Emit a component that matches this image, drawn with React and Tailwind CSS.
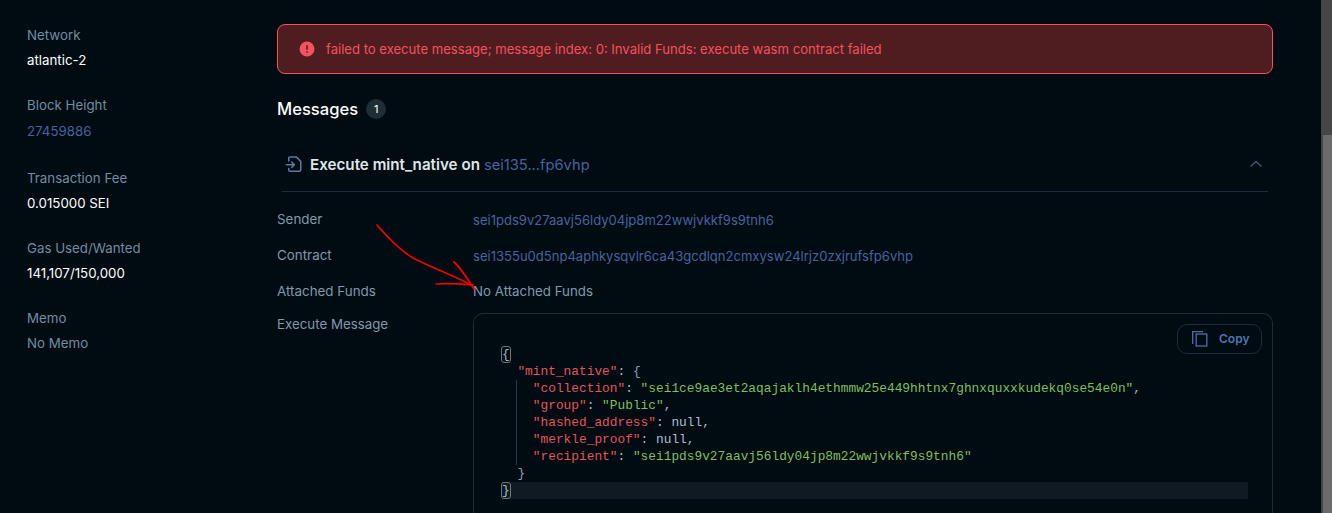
import React from 'react';

const sans = "font-['Inter',sans-serif]";

const SideItem = ({ label, value, valueClass = 'text-white', gapClass = 'mt-[5px]', className = '' }) => (
    <div className={`flex flex-col ${className}`}>
        <span className="h-[20px] text-[13.3px] leading-[20px] text-[#6f8ea3]">{label}</span>
        <span className={`h-[20px] text-[13.3px] leading-[20px] ${gapClass} ${valueClass}`}>{value}</span>
    </div>
);

const Row = ({ label, children, className = '' }) => (
    <div className={`flex items-center ${className}`}>
        <span className="w-[196px] shrink-0 text-[13.4px] text-[#7f9aad]">{label}</span>
        {children}
    </div>
);

const Key = ({ children }) => <span className="text-[#e0565b]">{children}</span>;
const Str = ({ children }) => <span className="text-[#7fbf5f]">{children}</span>;
const Pun = ({ children }) => <span className="text-[#a9b7c6]">{children}</span>;

const CodeBlock = () => (
    <div className="relative mt-[20px] h-[200px] rounded-t-[10px] border border-b-0 border-[#1d2c38] pl-[28px] pt-[32px]">
        <button className="absolute right-[10px] top-[10px] flex h-[30px] w-[85px] items-center rounded-[10px] border border-[#1d2c38] pl-[14px] text-[#4f74b3]">
            <svg width="16" height="16" viewBox="0 0 16 16" fill="none" stroke="#4f6fa8" strokeWidth="1.3">
                <path d="M0.7 13V0.7H11" />
                <rect x="4.2" y="3" width="10.6" height="12" />
            </svg>
            <span className="ml-[11px] text-[12px] font-semibold">Copy</span>
        </button>
        <pre className="relative font-['Liberation_Mono',monospace] text-[12.84px] leading-[17px] text-[#a9b7c6]">
            <div><span className="rounded-[2px] outline outline-1 outline-[#6b7780]">{'{'}</span></div>
            <div>{'  '}<Key>"mint_native"</Key><Pun>: </Pun><span className="text-[#8aa0c0]">{'{'}</span></div>
            <div>{'    '}<Key>"collection"</Key><Pun>: </Pun><Str>"sei1ce9ae3et2aqajaklh4ethmmw25e449hhtnx7ghnxquxxkudekq0se54e0n"</Str><Pun>,</Pun></div>
            <div>{'    '}<Key>"group"</Key><Pun>: </Pun><Str>"Public"</Str><Pun>,</Pun></div>
            <div>{'    '}<Key>"hashed_address"</Key><Pun>: </Pun><span className="text-[#a9bfd6]">null</span><Pun>,</Pun></div>
            <div>{'    '}<Key>"merkle_proof"</Key><Pun>: </Pun><span className="text-[#a9bfd6]">null</span><Pun>,</Pun></div>
            <div>{'    '}<Key>"recipient"</Key><Pun>: </Pun><Str>"sei1pds9v27aavj56ldy04jp8m22wwjvkkf9s9tnh6"</Str></div>
            <div>{'  '}<span className="text-[#8aa0c0]">{'}'}</span></div>
            <div className="mr-[24px] bg-[#0f1a22]"><span className="rounded-[2px] outline outline-1 outline-[#6b7780]">{'}'}</span></div>
            <span className="absolute left-[14px] top-[34px] h-[85px] w-px bg-[#2c3740]"></span>
        </pre>
    </div>
);

export default function App() {
    return (
        <div className={`relative flex h-[513px] overflow-hidden bg-[#010b12] ${sans}`}>
            <aside className="w-[277px] shrink-0 pl-[27px] pt-[25px]">
                <SideItem label="Network" value="atlantic-2" />
                <SideItem className="mt-[25px]" gapClass="mt-[6px]" label="Block Height" value="27459886" valueClass="text-[#46639f]" />
                <SideItem className="mt-[27px]" label="Transaction Fee" value="0.015000 SEI" />
                <SideItem className="mt-[25px]" label="Gas Used/Wanted" value="141,107/150,000" />
                <SideItem className="mt-[25px]" label="Memo" value="No Memo" valueClass="text-[#6f8ea3]" />
            </aside>
            <main className="w-[996px] shrink-0 pt-[24px]">
                <div className="flex h-[50px] items-center rounded-[8px] border border-[#f4525e] bg-[#4f1c1f] pl-[20px] text-[13.08px] text-[#f4525e]">
                    <svg width="18" height="18" viewBox="0 0 24 24" fill="#f4525e">
                        <path d="M12 2a10 10 0 1 0 0 20 10 10 0 0 0 0-20zm1 15h-2v-2h2v2zm0-4h-2V7h2v6z" />
                    </svg>
                    <span className="ml-[10px] mt-[2px]">failed to execute message; message index: 0: Invalid Funds: execute wasm contract failed</span>
                </div>
                <div className="mt-[22px] flex h-[26px] items-center">
                    <span className="text-[16.6px] font-medium text-white">Messages</span>
                    <span className="ml-[8px] flex h-[20px] w-[20px] items-center justify-center rounded-full bg-[#1f2d36] text-[11px] text-white">1</span>
                </div>
                <div className="mx-[5px] mt-[18px] flex h-[52px] items-center border-b border-[#1d2c38] pb-[3px] pl-[3px] pr-[3px]">
                    <svg width="18" height="18" viewBox="0 0 24 24" fill="none" stroke="#5b78a8" strokeWidth="2" strokeLinecap="round" strokeLinejoin="round">
                        <path d="M5 8V4a1.5 1.5 0 0 1 1.5-1.5H15l6 6V20a1.5 1.5 0 0 1-1.5 1.5h-13A1.5 1.5 0 0 1 5 20v-2" />
                        <path d="M2 13h10M9 9.5l3.5 3.5L9 16.5" />
                    </svg>
                    <span className="ml-[7px] mt-[2px] text-[15.2px] font-semibold text-[#dfe6ea]">Execute mint_native on</span>
                    <span className="ml-[4px] mt-[2px] text-[14.7px] text-[#46639f]">sei135...fp6vhp</span>
                    <svg className="ml-auto mr-[1px]" width="16" height="16" viewBox="0 0 16 16" fill="none" stroke="#3c5368" strokeWidth="1.6">
                        <path d="M2.5 10.5L8 5.5l5.5 5" />
                    </svg>
                </div>
                <Row className="mt-[15px] h-[24px]" label="Sender">
                    <span className="mt-[4px] text-[13.05px] text-[#46639f]">sei1pds9v27aavj56ldy04jp8m22wwjvkkf9s9tnh6</span>
                </Row>
                <Row className="mt-[12px] h-[24px]" label="Contract">
                    <span className="mt-[4px] text-[13.05px] text-[#46639f]">sei1355u0d5np4aphkysqvlr6ca43gcdlqn2cmxysw24lrjz0zxjrufsfp6vhp</span>
                </Row>
                <Row className="mt-[12px] h-[24px]" label="Attached Funds">
                    <span className="mt-[2px] text-[13.3px] text-[#7f9aad]">No Attached Funds</span>
                </Row>
                <div className="flex">
                    <span className="mt-[12px] h-[20px] w-[196px] shrink-0 text-[13.3px] text-[#7f9aad]">Execute Message</span>
                    <div className="-mt-[10px] flex-1">
                        <CodeBlock />
                    </div>
                </div>
            </main>
            <div className="ml-[48px] w-[11px] shrink-0 bg-[#464646]">
                <div className="ml-[2px] mt-[135px] h-[378px] bg-[#6b6b6b]"></div>
            </div>
            {/* hand drawn annotation arrow */}
            <svg className="pointer-events-none absolute inset-0" width="1332" height="513" fill="none" stroke="#f00000" strokeWidth="1.7" strokeLinecap="round">
                <path d="M377 225C388 238 400 250 413 258C430 267 455 276 473 286" />
                <path d="M454 262C461 268 467 278 474 289" />
                <path d="M436 284C448 283 462 284 473 285" />
            </svg>
        </div>
    );
}
